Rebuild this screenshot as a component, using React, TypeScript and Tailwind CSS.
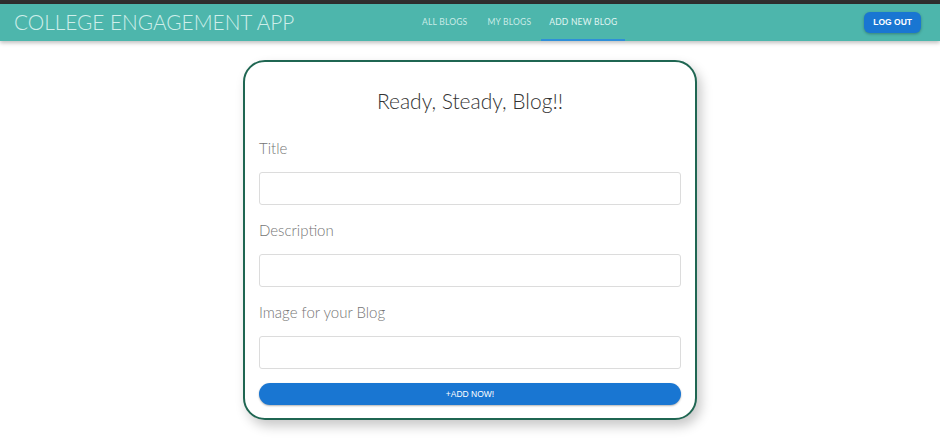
import * as React from "react";

const font = { fontFamily: "Lato, 'Open Sans', sans-serif" };
const btnFont = { fontFamily: "'Liberation Sans', Arial, sans-serif" };

function Field({ label }: { label: string }) {
  return (
    <div className="flex flex-col">
      <label className="text-[15px] font-light text-[#757575] leading-[20px] mb-[14px]">{label}</label>
      <input
        type="text"
        className="h-[33px] w-full rounded-[3px] border border-[#dcdcdc] bg-white px-2 outline-none"
      />
    </div>
  );
}

export default function App() {
  return (
    <div className="min-h-[443px] w-full bg-white" style={font}>
      <div className="h-[4px] bg-[#2f2f2f]" />
      <header className="flex h-[37px] items-center bg-[#4db6ac] shadow-[0_2px_4px_rgba(0,0,0,0.25)] relative z-10">
        <div className="pl-[14px] text-[20.8px] font-light text-[#cfeeea] leading-none w-[412px]">
          COLLEGE ENGAGEMENT APP
        </div>
        <nav className="flex h-full items-stretch text-[8.5px] tracking-[0.2px] text-[#c9ebe7]">
          <a className="flex items-center px-[10px]">ALL BLOGS</a>
          <a className="flex items-center px-[10px]">MY BLOGS</a>
          <a className="flex items-center px-[8px] border-b-[2px] border-[#2f8fd8] pt-[2px] text-[#e0f5f2]">ADD NEW BLOG</a>
        </nav>
        <div className="flex-1" />
        <button
          className="mr-[19px] h-[21px] rounded-[6px] bg-[#1976d2] px-[9px] text-[8.5px] font-bold text-white shadow-[0_1px_3px_rgba(0,0,0,0.3)]"
          style={btnFont}
        >
          LOG OUT
        </button>
      </header>
      <main className="flex justify-center pt-[19px]">
        <div className="w-[454px] rounded-[22px] border-2 border-[#1f6652] bg-white px-[14px] pt-[24px] pb-[13px] shadow-[4px_6px_12px_rgba(0,0,0,0.22)]">
          <h1 className="text-center text-[21px] font-light text-[#333] leading-[30px] mb-[22px]">
            Ready, Steady, Blog!!
          </h1>
          <div className="flex flex-col gap-[15px]">
            <Field label="Title" />
            <Field label="Description" />
            <Field label="Image for your Blog" />
          </div>
          <button
            className="mt-[14px] h-[22px] w-full rounded-full bg-[#1976d2] text-[8.5px] text-white shadow-[0_1px_2px_rgba(0,0,0,0.3)]"
            style={btnFont}
          >
            +ADD NOW!
          </button>
        </div>
      </main>
    </div>
  );
}
